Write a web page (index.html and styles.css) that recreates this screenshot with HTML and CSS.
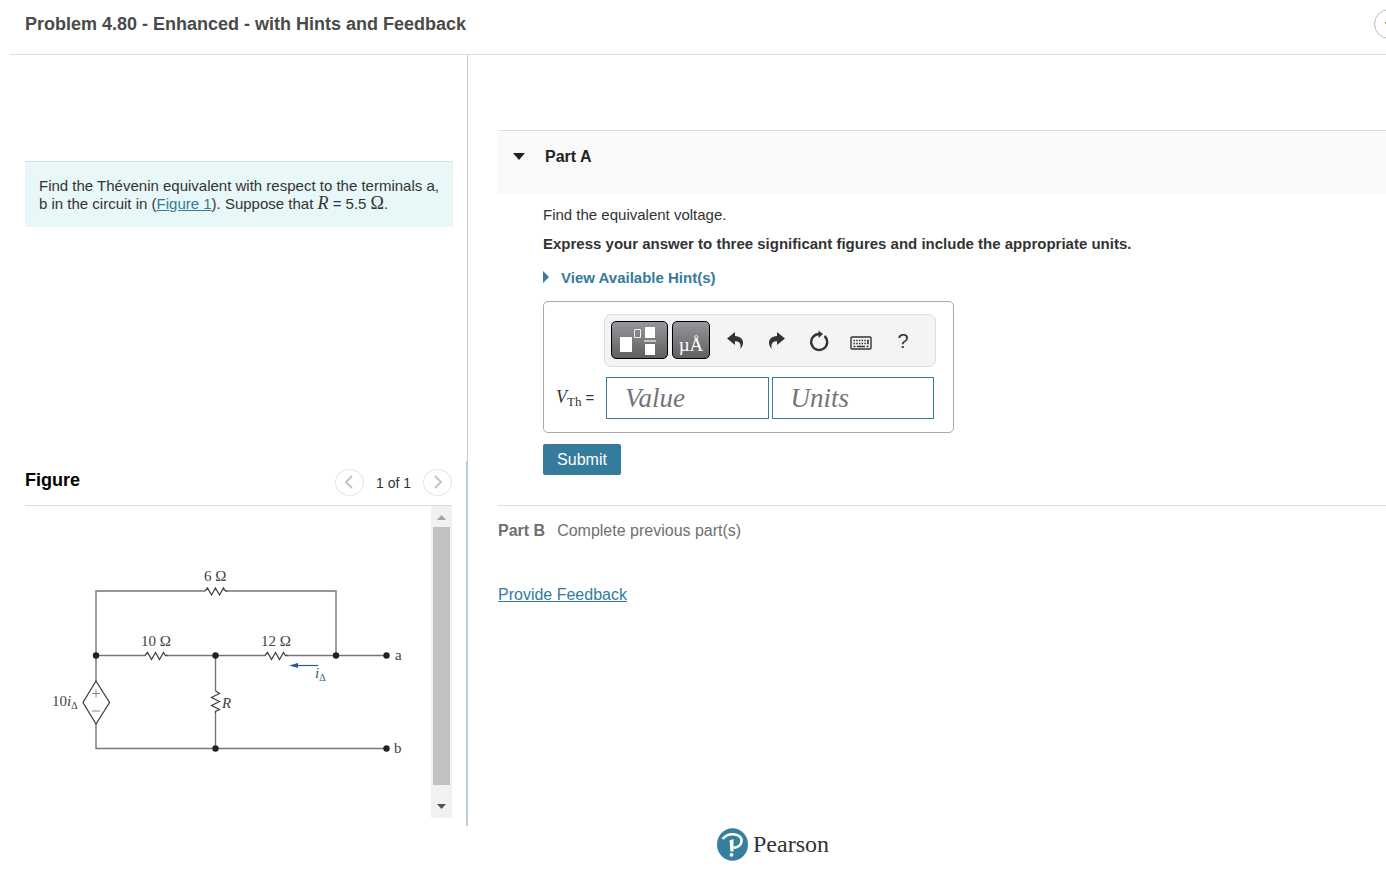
FILE: index.html
```html
<!DOCTYPE html>
<html lang="en">
<head>
  <meta charset="UTF-8">
  <meta name="viewport" content="width=device-width, initial-scale=1.0">
  <title>Problem 4.80 - Enhanced - with Hints and Feedback</title>
  <link rel="stylesheet" href="styles.css">
</head>
<body>
  <header class="header">
    <h1>Problem 4.80 - Enhanced - with Hints and Feedback</h1>
    <button class="round next-item" aria-label="Next item">
      <svg width="8" height="14" viewBox="0 0 8 14"><path d="M0 6h2" stroke="#c98b45" stroke-width="2"/></svg>
    </button>
  </header>

  <main class="main">
    <div class="left">
      <section class="intro">
        <div class="problem">
          Find the Thévenin equivalent with respect to the terminals a, b in the circuit in (<a href="#figure">Figure 1</a>). Suppose that <span class="math"><i>R</i></span> = 5.5 <span class="math">Ω</span>.
        </div>
      </section>

      <section class="figure" id="figure">
        <div class="figure-head">
          <h2>Figure</h2>
          <div class="pager">
            <button class="round" aria-label="Previous figure">
              <svg width="10" height="14" viewBox="0 0 10 14"><path d="M8 1L2 7l6 6" fill="none" stroke="#c4c4c4" stroke-width="2"/></svg>
            </button>
            <span>1 of 1</span>
            <button class="round" aria-label="Next figure">
              <svg width="10" height="14" viewBox="0 0 10 14"><path d="M2 1l6 6-6 6" fill="none" stroke="#c4c4c4" stroke-width="2"/></svg>
            </button>
          </div>
        </div>
        <div class="figure-body">
          <svg class="circuit" width="400" height="312" viewBox="25 506 400 312" role="img" aria-label="Circuit diagram">
            <!-- wires -->
            <g fill="none" stroke="#777" stroke-width="1.4">
              <path d="M96 681V591H205M227 591H336V655.500"/>
              <path d="M96 655.500H145M167 655.500H265M287 655.500H386"/>
              <path d="M215.500 655.500V691M215.500 713V748.500"/>
              <path d="M96 724V748.500H386"/>
            </g>
            <!-- resistors and source -->
            <g fill="none" stroke="#444" stroke-width="1.3">
              <path d="M205 591l2.500-3 4 7 4-7 4 7 4-7 2 3h2"/>
              <path d="M145 655.500l2.500-3 4 7 4-7 4 7 4-7 2 3h2"/>
              <path d="M265 655.500l2.500-3 4 7 4-7 4 7 4-7 2 3h2"/>
              <path d="M215.500 691l4 2.500-8 4 8 4-8 4 8 4-4 2v1.500"/>
              <path d="M96 681l13.500 21.500L96 724 83 702.500z"/>
            </g>
            <path d="M92 693.500h8M96 689.500v8M92 711h8" stroke="#888"/>
            <g fill="#222">
              <circle cx="96" cy="655.500" r="3.200"/>
              <circle cx="215.500" cy="655.500" r="3.200"/>
              <circle cx="336" cy="655.500" r="3.200"/>
              <circle cx="386.500" cy="655.500" r="3.200"/>
              <circle cx="215.500" cy="748.500" r="3.200"/>
              <circle cx="386.500" cy="748.500" r="3.200"/>
            </g>
            <path d="M318 665.500H296" stroke="#2b5f87" stroke-width="1.200"/>
            <path d="M289 665.500l9-2.500v5z" fill="#2b5f87"/>
            <g class="labels">
              <text x="204" y="581">6 Ω</text>
              <text x="141" y="646">10 Ω</text>
              <text x="261" y="646">12 Ω</text>
              <text x="52" y="706">10<tspan font-style="italic">i</tspan><tspan class="sub" dy="3">Δ</tspan></text>
              <text x="222" y="708" font-style="italic">R</text>
              <text x="395" y="660">a</text>
              <text x="394" y="753">b</text>
              <text class="current" x="315" y="678"><tspan font-style="italic">i</tspan><tspan class="sub" dy="3">Δ</tspan></text>
            </g>
          </svg>
          <div class="scrollbar">
            <button class="arrow" aria-label="Scroll up"><svg width="9" height="5" viewBox="0 0 9 5"><path d="M0 5l4.500-5L9 5z" fill="#a3a3a3"/></svg></button>
            <div class="thumb"></div>
            <button class="arrow" aria-label="Scroll down"><svg width="9" height="5" viewBox="0 0 9 5"><path d="M0 0h9L4.500 5z" fill="#505050"/></svg></button>
          </div>
        </div>
      </section>
    </div>

    <div class="right">
      <div class="part-head">
        <svg width="12" height="7" viewBox="0 0 12 7"><path d="M0 0h12L6 7z" fill="#222"/></svg>
        <h2>Part A</h2>
      </div>

      <div class="part-body">
        <p>Find the equivalent voltage.</p>
        <p class="instructions">Express your answer to three significant figures and include the appropriate units.</p>
        <button class="hints">
          <svg width="6" height="12" viewBox="0 0 6 12"><path d="M0 0l6 6-6 6z" fill="#357b9b"/></svg>
          View Available Hint(s)
        </button>

        <div class="answer">
          <div class="toolbar">
            <button class="dark templates" aria-label="Templates">
              <svg width="36" height="30" viewBox="0 0 36 30">
                <path d="M0 12h12v15H0zM25 2h10v11H25zM25 19h10v11H25z" fill="#fff"/>
                <path d="M24 16h12" stroke="#ddd" stroke-width="1.500"/>
                <path d="M14.500 4.500h6v8h-6z" fill="none" stroke="#eee"/>
              </svg>
            </button>
            <button class="dark symbols" aria-label="Symbols">µÅ</button>
            <button class="tool" aria-label="Undo">
              <svg width="16" height="18" viewBox="0 0 16 18"><path d="M8 0L0 6.500 8 13V9.200c4.500-.2 6.300 2.300 5.300 7.800 5-6 3-12.600-5.300-13.100z" fill="#333"/></svg>
            </button>
            <button class="tool" aria-label="Redo">
              <svg width="16" height="18" viewBox="0 0 16 18"><path d="M8 0l8 6.500L8 13V9.200c-4.500-.2-6.300 2.300-5.300 7.800-5-6-3-12.600 5.300-13.100z" fill="#333"/></svg>
            </button>
            <button class="tool" aria-label="Reset">
              <svg width="20" height="22" viewBox="0 0 20 22"><path d="M15.500 6a8 8 0 1 1-5-2" fill="none" stroke="#333" stroke-width="2.400"/><path d="M9.500.500l4.500 3.500-4.500 4z" fill="#333"/></svg>
            </button>
            <button class="tool" aria-label="Keyboard shortcuts">
              <svg class="keyboard" width="22" height="14" viewBox="0 0 22 14">
                <rect x="1" y="1" width="20" height="12" rx="1" fill="none" stroke="#333" stroke-width="1.400"/>
                <path d="M3.500 4.500h15M3.500 7.500h15" stroke="#333" stroke-width="1.600" stroke-dasharray="1.500 1.200"/>
                <path d="M3.500 10.500h2M7 10.500h8M16.500 10.500h2M18 4v4" stroke="#333" stroke-width="1.400"/>
              </svg>
            </button>
            <button class="tool help" aria-label="Help">?</button>
          </div>
          <div class="fields">
            <label for="value"><i>V</i><small>Th</small> =</label>
            <input id="value" type="text" placeholder="Value">
            <input type="text" placeholder="Units" aria-label="Units">
          </div>
        </div>

        <button class="submit">Submit</button>
      </div>

      <div class="part-b"><b>Part B</b><span>Complete previous part(s)</span></div>
      <a class="feedback" href="#">Provide Feedback</a>
    </div>
  </main>

  <footer class="footer">
    <svg width="31" height="33" viewBox="0 0 31 33">
      <ellipse cx="15.500" cy="16.500" rx="15.500" ry="16.200" fill="#357f9f"/>
      <path d="M5.500 11C9 7 14 5.800 18 6.500c4.500.7 7 3.500 6.500 7.200-.5 3.500-4 5.800-8 6" fill="none" stroke="#fff" stroke-width="2.600"/>
      <path d="M12.500 12.500l4-1.500v12.500h-3z" fill="#fff"/>
      <circle cx="14.500" cy="26.800" r="1.900" fill="#fff"/>
    </svg>
    <span>Pearson</span>
  </footer>
</body>
</html>
```
FILE: styles.css
```css
* {
  box-sizing: border-box;
}
body {
  margin: 0;
  font-family: "Liberation Sans", Arial, sans-serif;
  font-size: 15px;
  line-height: 18px;
  color: #333;
  background: #fff;
}
h1, h2, p {
  margin: 0;
}
button {
  padding: 0;
  border: none;
  background: none;
  font-family: inherit;
  cursor: pointer;
}
a {
  color: #357b9b;
}
.header {
  display: flex;
  align-items: center;
  justify-content: space-between;
  height: 55px;
  margin-left: 10px;
  padding: 0 0 6px 15px;
  border-bottom: 1px solid #ddd;
  overflow: hidden;
}
.header h1 {
  font-size: 18px;
  color: #4a4a4a;
}
.round {
  display: flex;
  align-items: center;
  justify-content: center;
  width: 29px;
  height: 27px;
  border: 1px solid #e6e6e6;
  border-radius: 50%;
}
.header .next-item {
  flex-shrink: 0;
  width: 30px;
  height: 30px;
  margin-right: -18px;
  border-color: #bbb;
}
.main {
  display: flex;
}
.left {
  width: 468px;
  flex-shrink: 0;
}
.intro {
  min-height: 406px;
  padding: 106px 14px 0 25px;
  border-right: 1px solid #c3cbdc;
}
.problem {
  padding: 15px 12px 14px 14px;
  border-top: 1px solid #d8e0df;
  background: #e8f7f7;
}
.math {
  font-family: "Liberation Serif", serif;
  font-size: 18px;
  line-height: 16px;
}
.figure {
  padding: 0 14px 8px 25px;
  border-right: 2px solid #bccbdc;
}
.figure-head {
  display: flex;
  align-items: center;
  justify-content: space-between;
  height: 45px;
  border-bottom: 1px solid #ddd;
}
.figure-head h2 {
  padding-bottom: 6px;
  font-size: 18px;
  color: #000;
}
.pager {
  display: flex;
  align-items: center;
  gap: 12px;
  padding-bottom: 2px;
  font-size: 14px;
}
.pager span {
  padding-top: 2px;
}
.figure-body {
  display: flex;
  justify-content: space-between;
}
.circuit {
  display: block;
}
.labels {
  font-family: "Liberation Serif", serif;
  font-size: 15px;
  fill: #444;
}
.labels .sub {
  font-size: 10px;
}
.labels .current {
  fill: #2b5f87;
}
.scrollbar {
  display: flex;
  flex-direction: column;
  width: 21px;
  height: 312px;
  padding: 0 2px;
  background: #f1f1f1;
}
.thumb {
  height: 258px;
  background: #c1c1c1;
}
.arrow {
  display: flex;
  align-items: center;
  justify-content: center;
  height: 21px;
  padding-top: 2px;
}
.arrow:last-child {
  height: 33px;
  padding-top: 10px;
}
.right {
  flex: 1;
  padding: 75px 0 0 30px;
}
.part-head {
  display: flex;
  gap: 20px;
  height: 64px;
  padding: 17px 15px;
  border-top: 1px solid #ddd;
  background: #f9f9f9;
}
.part-head svg {
  margin-top: 5px;
}
.part-head h2 {
  font-size: 16px;
  color: #222;
}
.part-body {
  padding: 12px 45px 30px;
}
.instructions {
  margin-top: 11px;
  font-weight: bold;
}
.hints {
  display: flex;
  align-items: center;
  gap: 12px;
  margin-top: 16px;
  font-size: 15px;
  line-height: 18px;
  font-weight: bold;
  color: #357b9b;
}
.hints svg {
  margin-bottom: 2px;
}
.answer {
  width: 411px;
  margin-top: 14px;
  padding: 12px 17px 13px 12px;
  border: 1px solid #aaa;
  border-radius: 5px;
}
.toolbar {
  display: flex;
  align-items: center;
  gap: 4px;
  height: 53px;
  margin-left: 48px;
  padding: 0 6px 1px;
  border: 1px solid #ddd;
  border-radius: 7px;
  background: #f4f4f4;
}
.dark {
  display: flex;
  align-items: center;
  justify-content: center;
  height: 38px;
  border: 1px solid #000;
  border-radius: 5px;
  background: linear-gradient(#98969e, #5f5f5f);
  color: #fff;
}
.templates {
  width: 57px;
  padding-right: 4px;
}
.symbols {
  width: 38px;
  margin-right: 2px;
  padding-top: 10px;
  font-family: "Liberation Serif", serif;
  font-size: 19px;
}
.tool {
  display: flex;
  align-items: center;
  justify-content: center;
  width: 38px;
  height: 38px;
  padding-top: 2px;
}
.keyboard {
  margin-top: 4px;
}
.help {
  font-size: 20px;
  color: #333;
}
.fields {
  display: flex;
  align-items: center;
  gap: 3px;
  margin-top: 10px;
  padding-right: 2px;
}
.fields label {
  width: 47px;
}
.fields label i {
  font-family: "Liberation Serif", serif;
  font-size: 18px;
}
.fields label small {
  font-family: "Liberation Serif", serif;
  font-size: 13px;
  position: relative;
  top: 3px;
}
.fields input {
  flex: 1;
  min-width: 0;
  height: 42px;
  padding: 0 18px;
  border: 1px solid #357b9b;
  font: italic 27px "Liberation Serif", serif;
}
.fields input::placeholder {
  color: #757575;
}
.submit {
  display: block;
  width: 78px;
  height: 31px;
  margin-top: 11px;
  border-radius: 2px;
  background: #357b9b;
  font-size: 16px;
  color: #fff;
}
.part-b {
  display: flex;
  gap: 12px;
  padding-top: 16px;
  border-top: 1px solid #ddd;
  font-size: 16px;
  color: #6f706f;
}
.feedback {
  display: inline-block;
  margin-top: 46px;
  font-size: 16px;
}
.footer {
  display: flex;
  align-items: center;
  justify-content: center;
  gap: 5px;
  padding: 2px 0 20px 160px;
  font-family: "Liberation Serif", serif;
  font-size: 24px;
}
.footer span {
  padding-bottom: 2px;
}
```
